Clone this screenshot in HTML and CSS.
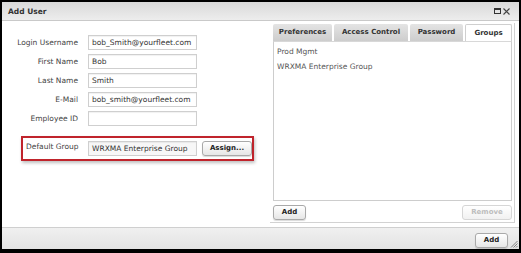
FILE: index.html
```html
<!DOCTYPE html>
<html>
<head>
<meta charset="utf-8">
<link rel="stylesheet" href="styles.css">
</head>
<body>
<div class="window">
  <div class="titlebar">
    <span class="title">Add User</span>
    <span class="controls">
      <svg class="ico-max" width="7" height="6" viewBox="0 0 7 6"><rect x="0.5" y="0.5" width="6" height="5" fill="none" stroke="#333" stroke-width="1"/><rect x="0" y="0" width="7" height="2" fill="#333"/></svg>
      <svg class="ico-close" width="7" height="7" viewBox="0 0 7 7"><path d="M0.5 0.5 L6.5 6.5 M6.5 0.5 L0.5 6.5" stroke="#444" stroke-width="1.1"/></svg>
    </span>
  </div>
  <div class="content">
    <div class="left">
      <div class="form">
        <label class="lbl">Login Username</label><div class="input">bob_Smith@yourfleet.com</div>
        <label class="lbl">First Name</label><div class="input">Bob</div>
        <label class="lbl">Last Name</label><div class="input">Smith</div>
        <label class="lbl">E-Mail</label><div class="input">bob_smith@yourfleet.com</div>
        <label class="lbl">Employee ID</label><div class="input"></div>
      </div>
      <div class="highlight">
        <label class="hl-lbl">Default Group</label>
        <div class="input">WRXMA Enterprise Group</div>
        <button class="btn btn-assign">Assign...</button>
      </div>
    </div>
    <div class="panel">
      <div class="tabs">
        <div class="tab t-pref">Preferences</div>
        <div class="tab t-acc">Access Control</div>
        <div class="tab t-pwd">Password</div>
        <div class="tab t-grp active">Groups</div>
      </div>
      <div class="list">
        <div class="item">Prod Mgmt</div>
        <div class="item">WRXMA Enterprise Group</div>
      </div>
      <div class="list-actions">
        <button class="btn btn-small">Add</button>
        <button class="btn btn-remove" disabled>Remove</button>
      </div>
    </div>
  </div>
  <div class="footer">
    <button class="btn btn-small">Add</button>
    <svg class="grip" width="8" height="8" viewBox="0 0 8 8"><path d="M7.5 1 L1 7.5 M7.5 3.5 L3.5 7.5 M7.5 6 L6 7.5" stroke="#777" stroke-width="0.9"/></svg>
  </div>
</div>
</body>
</html>
```
FILE: styles.css
```css
html, body {
  margin: 0;
  padding: 0;
  background: #000;
}
body {
  width: 521px;
  height: 253px;
  overflow: hidden;
  font-family: "DejaVu Sans", Verdana, sans-serif;
  font-size: 7.5px;
  color: #444;
}
.window {
  margin: 2px 0 0 2px;
  width: 517px;
  height: 247px;
  background: #fff;
  display: flex;
  flex-direction: column;
  position: relative;
}
.titlebar {
  height: 18px;
  flex: none;
  border-bottom: 1px solid #c9c9c9;
  background: linear-gradient(to bottom, #d9d9d9, #ededed);
  display: flex;
  align-items: center;
  justify-content: space-between;
  padding: 0 9px 0 6px;
}
.title {
  font-weight: bold;
  font-size: 7.5px;
  color: #333;
}
.controls {
  display: flex;
  align-items: center;
  gap: 2px;
}
.content {
  flex: 1;
  display: flex;
  min-height: 0;
}
.left {
  width: 266px;
  flex: none;
  padding-top: 14px;
}
.form {
  display: grid;
  grid-template-columns: 76px 109px;
  column-gap: 10px;
  row-gap: 4px;
  align-items: center;
}
.lbl {
  text-align: right;
  color: #444;
}
.input {
  height: 15px;
  box-sizing: border-box;
  border: 1px solid #cfcfcf;
  box-shadow: inset 0 1px 1px rgba(0,0,0,0.06);
  background: #fff;
  padding: 0 3px;
  line-height: 13px;
  color: #333;
  white-space: nowrap;
  overflow: hidden;
}
.highlight {
  margin: 10px 0 0 19px;
  width: 233px;
  box-sizing: border-box;
  border: 2px solid #c0242c;
  padding: 3px 0 3px 3px;
  display: flex;
  align-items: flex-start;
  box-shadow: 1px 2px 3px rgba(0,0,0,0.25);
}
.hl-lbl {
  width: 62px;
  flex: none;
  padding-top: 1px;
  color: #444;
}
.highlight .input {
  width: 109px;
  flex: none;
  background: #f7f7f7;
}
.btn {
  font-family: "DejaVu Sans", Verdana, sans-serif;
  font-weight: bold;
  font-size: 7px;
  color: #222;
  background: linear-gradient(to bottom, #ffffff, #e6e6e6);
  border: 1px solid #a9a9a9;
  border-radius: 3px;
  box-shadow: 0 1px 1px rgba(0,0,0,0.15);
  padding: 0;
  height: 15px;
  line-height: 13px;
  box-sizing: border-box;
}
.btn-assign {
  margin-left: 5px;
  width: 50px;
}
.panel {
  margin: 2px 4px 4px 2px;
  flex: 1;
  box-sizing: border-box;
  border-right: 1px solid #d2d2d2;
  border-bottom: 1px solid #d2d2d2;
  padding: 1px 2px 2px 3px;
  display: flex;
  flex-direction: column;
}
.tabs {
  display: flex;
  gap: 2px;
  height: 17px;
  flex: none;
}
.tab {
  box-sizing: border-box;
  height: 17px;
  line-height: 16px;
  text-align: center;
  font-weight: bold;
  font-size: 7px;
  color: #333;
  background: linear-gradient(to bottom, #e4e4e4, #cdcdcd);
  border-radius: 2px 2px 0 0;
}
.t-pref { width: 59px; }
.t-acc { width: 74px; }
.t-pwd { width: 53px; }
.t-grp { width: 47px; }
.tab.active {
  background: #fff;
  border: 1px solid #cfcfcf;
  border-bottom: none;
  line-height: 17px;
}
.list {
  flex: 1;
  border: 1px solid #cdcdcd;
  border-top-color: #d8d8d8;
  padding: 2px 0 0 3px;
  color: #555;
}
.item {
  line-height: 15px;
}
.list-actions {
  display: flex;
  justify-content: space-between;
  margin-top: 4px;
  flex: none;
}
.btn-small {
  width: 33px;
}
.btn-remove {
  width: 50px;
  color: #bdbdbd;
  border-color: #d6d6d6;
  box-shadow: none;
  background: linear-gradient(to bottom, #ffffff, #f1f1f1);
}
.footer {
  height: 22px;
  flex: none;
  box-sizing: border-box;
  border-top: 1px solid #cfcfcf;
  background: linear-gradient(to bottom, #f0f0f0, #e3e3e3);
  display: flex;
  justify-content: flex-end;
  align-items: flex-start;
  padding: 5px 11px 0 0;
}
.grip {
  position: absolute;
  right: 1px;
  bottom: 1px;
}
```
